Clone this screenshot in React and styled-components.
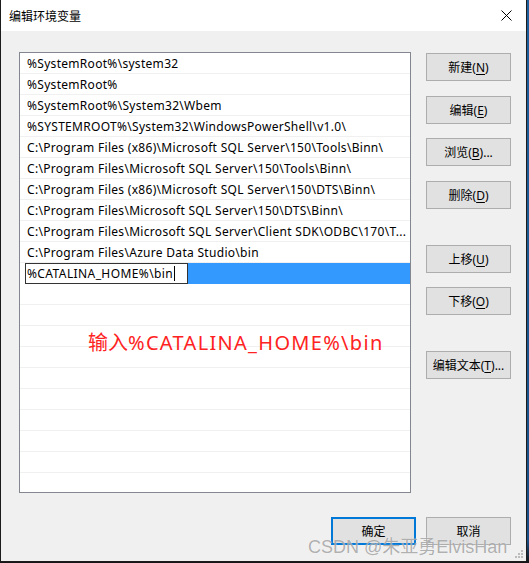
import React from 'react';
import styled, { createGlobalStyle } from 'styled-components';

const GlobalStyle = createGlobalStyle`
    html, body {
        margin: 0;
        padding: 0;
        background: #1b1b1b;
    }
    body {
        width: 529px;
        height: 563px;
        overflow: hidden;
        font-family: "Noto Sans", "Noto Sans CJK SC", sans-serif;
    }
`;

const Desktop = styled.div`
    width: 529px;
    height: 563px;
    background: linear-gradient(180deg, #1e5f9c 0%, #1a4f86 96%, #141414 100%);
`;

const Window = styled.div`
    position: relative;
    width: 525px;
    height: 561px;
    border: 1px solid #1c1c1c;
    border-top: none;
    background: #f0f0f0;
    display: flex;
    flex-direction: column;
    overflow: hidden;
`;

const TitleBar = styled.div`
    height: 31px;
    background: #fff;
    display: flex;
    align-items: center;
    justify-content: space-between;
    padding: 0 14px 0 8px;
    font-size: 12px;
    color: #000;
`;

const Body = styled.div`
    flex: 1;
    display: flex;
    flex-direction: column;
    padding: 21px 14px 0 18px;
`;

const Main = styled.div`
    display: flex;
    gap: 15px;
`;

const ListBox = styled.div`
    position: relative;
    width: 390px;
    height: 439px;
    border: 1px solid #828790;
    background: #fff;
    overflow: hidden;
`;

const Row = styled.div`
    height: 20px;
    border-bottom: 1px solid #f0f0f0;
    display: flex;
    align-items: center;
    padding-left: 7px;
    font-size: 12px;
    letter-spacing: 0.3px;
    color: #000;
    white-space: nowrap;
    overflow: hidden;
`;

const EditRow = styled.div`
    height: 21px;
    display: flex;
    background: linear-gradient(90deg, transparent 0, transparent 167px, #3399ff 167px);
    padding-left: 5px;
`;

const EditBox = styled.div`
    width: 160px;
    height: 19px;
    border: 1px solid #333;
    background: #fff;
    display: flex;
    align-items: center;
    padding-left: 1px;
    font-size: 12px;
    letter-spacing: 0.4px;
    color: #000;
`;

const Caret = styled.span`
    display: inline-block;
    width: 1px;
    height: 15px;
    background: #000;
    margin-left: 1px;
`;

const Note = styled.div`
    position: absolute;
    left: 68px;
    top: 274px;
    font-size: 20px;
    color: #ff2222;
    white-space: nowrap;
    span {
        letter-spacing: 1.3px;
    }
`;

const ButtonColumn = styled.div`
    display: flex;
    flex-direction: column;
    padding-top: 1px;
`;

const Button = styled.div`
    box-sizing: border-box;
    width: 85px;
    height: 28px;
    margin-top: ${({ space }) => space || 0}px;
    background: #e1e1e1;
    border: ${({ primary }) => (primary ? '2px solid #0078d7' : '1px solid #adadad')};
    display: flex;
    align-items: center;
    justify-content: center;
    font-size: 12px;
    color: #000;
    u {
        text-underline-offset: 2px;
    }
`;

const Footer = styled.div`
    display: flex;
    justify-content: flex-end;
    gap: 10px;
    padding-top: 24px;
    padding-right: 1px;
`;

const Watermark = styled.div`
    position: absolute;
    left: 307px;
    top: 532px;
    font-family: "Liberation Sans", "Noto Sans CJK SC", sans-serif;
    font-size: 18px;
    color: rgba(110, 110, 110, 0.55);
    text-shadow: 0 0 1px rgba(255, 255, 255, 0.9);
    white-space: nowrap;
`;

const Grip = styled.svg`
    position: absolute;
    right: 3px;
    bottom: 3px;
`;

const paths = [
    '%SystemRoot%\\system32',
    '%SystemRoot%',
    '%SystemRoot%\\System32\\Wbem',
    '%SYSTEMROOT%\\System32\\WindowsPowerShell\\v1.0\\',
    'C:\\Program Files (x86)\\Microsoft SQL Server\\150\\Tools\\Binn\\',
    'C:\\Program Files\\Microsoft SQL Server\\150\\Tools\\Binn\\',
    'C:\\Program Files (x86)\\Microsoft SQL Server\\150\\DTS\\Binn\\',
    'C:\\Program Files\\Microsoft SQL Server\\150\\DTS\\Binn\\',
    'C:\\Program Files\\Microsoft SQL Server\\Client SDK\\ODBC\\170\\T...',
    'C:\\Program Files\\Azure Data Studio\\bin',
];

const buttons = [
    { label: '新建', key: 'N', space: 0 },
    { label: '编辑', key: 'E', space: 15 },
    { label: '浏览', key: 'B', tail: '...', space: 14 },
    { label: '删除', key: 'D', space: 15 },
    { label: '上移', key: 'U', space: 36 },
    { label: '下移', key: 'O', space: 14 },
    { label: '编辑文本', key: 'T', tail: '...', space: 36 },
];

const App = () => {
    return (
        <>
            <GlobalStyle />
            <Desktop>
                <Window>
                    <TitleBar>
                        <span>编辑环境变量</span>
                        <svg width="11" height="11" viewBox="0 0 11 11">
                            <path d="M0.5 0.5 L10.5 10.5 M10.5 0.5 L0.5 10.5" stroke="#000" strokeWidth="1" />
                        </svg>
                    </TitleBar>
                    <Body>
                        <Main>
                            <ListBox>
                                {paths.map((p, i) => (
                                    <Row key={i}>{p}</Row>
                                ))}
                                <EditRow>
                                    <EditBox>
                                        %CATALINA_HOME%\bin<Caret />
                                    </EditBox>
                                </EditRow>
                                {Array.from({ length: 10 }).map((_, i) => (
                                    <Row key={'e' + i} />
                                ))}
                                <Note>输入<span>%CATALINA_HOME%\bin</span></Note>
                            </ListBox>
                            <ButtonColumn>
                                {buttons.map((b) => (
                                    <Button key={b.key} space={b.space}>
                                        {b.label}(<u>{b.key}</u>){b.tail}
                                    </Button>
                                ))}
                            </ButtonColumn>
                        </Main>
                        <Footer>
                            <Button primary="true">确定</Button>
                            <Button>取消</Button>
                        </Footer>
                    </Body>
                    <Watermark>CSDN @朱亚勇ElvisHan</Watermark>
                    <Grip width="9" height="9" viewBox="0 0 9 9">
                        <rect x="7" y="1" width="2" height="2" fill="#bcbcbc" />
                        <rect x="4" y="4" width="2" height="2" fill="#bcbcbc" />
                        <rect x="7" y="4" width="2" height="2" fill="#bcbcbc" />
                        <rect x="1" y="7" width="2" height="2" fill="#bcbcbc" />
                        <rect x="4" y="7" width="2" height="2" fill="#bcbcbc" />
                        <rect x="7" y="7" width="2" height="2" fill="#bcbcbc" />
                    </Grip>
                </Window>
            </Desktop>
        </>
    );
};

export default App;
